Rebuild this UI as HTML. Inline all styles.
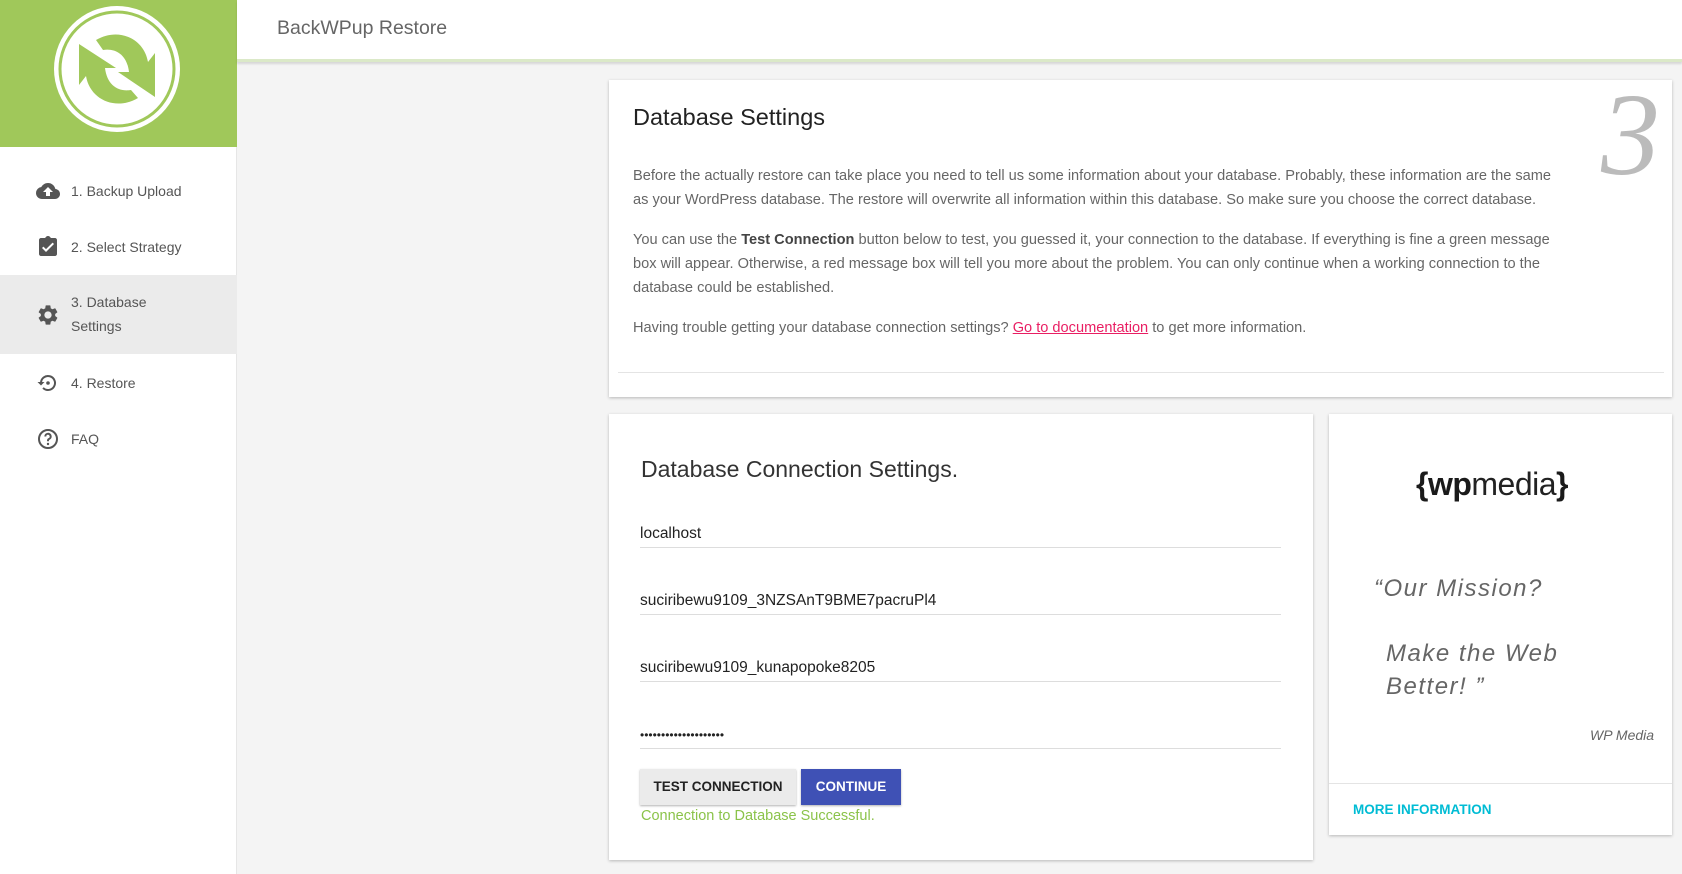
<!DOCTYPE html>
<html><head><meta charset="utf-8"><style>
*{box-sizing:border-box;margin:0;padding:0}
body{width:1682px;height:874px;background:#f4f4f4;font-family:"Liberation Sans",sans-serif;position:relative;overflow:hidden;color:#555}
.abs{position:absolute}
#side{left:0;top:0;width:237px;height:874px;background:#fff;border-right:1px solid #e6e6e6}
#logo{left:0;top:0;width:237px;height:147px;background:#a0c85a}
#hdr{left:237px;top:0;width:1445px;height:62px;background:#fff;border-bottom:3px solid #dbe9c8;box-shadow:0 2px 2px rgba(0,0,0,.12)}
.nav{position:absolute;left:71px;font-size:14px;color:#555;line-height:24px;white-space:nowrap}
.ico{position:absolute;left:36px;width:24px;height:24px}
.card{position:absolute;background:#fff;box-shadow:0 1px 3px rgba(0,0,0,.25)}
.p{position:absolute;left:633px;font-size:14.6px;line-height:24px;color:#666;white-space:nowrap}
.in{position:absolute;left:640px;width:641px;border-bottom:1px solid #ddd;height:30px;font-size:15.5px;color:#222;line-height:24px;padding-top:4px}
</style></head><body>
<div id="side" class="abs"></div>
<div id="logo" class="abs">
<svg width="237" height="147" viewBox="0 0 237 147"><circle cx="117" cy="69" r="63" fill="#fff"/><circle cx="117" cy="69" r="57" fill="none" stroke="#a0c85a" stroke-width="3"/>
<path d="M96 40 C118 27 144 38 148 62 L155 53 L155 97 L118 72 L129 72 C127 55 116 48 103 50 Z" fill="#a0c85a"/>
<path d="M138 98 C116 111 90 100 86 76 L79 85 L79 44 L116 68 L105 68 C107 85 118 92 131 90 Z" fill="#a0c85a"/></svg>
</div>
<div id="hdr" class="abs"><div style="position:absolute;left:40px;top:17px;font-size:19.5px;color:#666">BackWPup Restore</div></div>

<svg class="ico" style="top:179px" viewBox="0 0 24 24"><path fill="#555" d="M19.35 10.04A7.49 7.49 0 0 0 12 4C9.11 4 6.6 5.64 5.35 8.04A5.994 5.994 0 0 0 0 14c0 3.310 2.69 6 6 6h13c2.76 0 5-2.24 5-5 0-2.64-2.05-4.78-4.65-4.960zM14 13v4h-4v-4H7l5-5 5 5h-3z"/></svg>
<div class="nav" style="top:179px">1. Backup Upload</div>
<svg class="ico" style="top:235px" viewBox="0 0 24 24"><path fill="#555" d="M19 3h-4.18C14.4 1.84 13.3 1 12 1s-2.4.84-2.82 2H5c-1.1 0-2 .9-2 2v14c0 1.1.9 2 2 2h14c1.1 0 2-.9 2-2V5c0-1.1-.9-2-2-2zm-9 14l-4-4 1.41-1.41L10 14.17l6.590-6.59L18 9l-8 8z"/></svg>
<div class="nav" style="top:235px">2. Select Strategy</div>
<div class="abs" style="left:0;top:275px;width:237px;height:79px;background:#ebebeb"></div>
<svg class="ico" style="top:303px" viewBox="0 0 24 24"><path fill="#555" d="M19.14 12.94c.04-.3.06-.61.06-.94 0-.32-.02-.64-.07-.94l2.03-1.58a.49.49 0 0 0 .12-.61l-1.92-3.32a.488.488 0 0 0-.59-.22l-2.39.96c-.5-.38-1.03-.7-1.62-.94l-.36-2.54a.484.484 0 0 0-.48-.41h-3.84c-.24 0-.43.17-.47.41l-.36 2.54c-.59.24-1.13.57-1.62.94l-2.39-.96c-.22-.08-.47 0-.59.22L2.74 8.87c-.12.21-.08.47.12.61l2.03 1.58c-.05.3-.09.63-.09.94s.2.64.07.94l-2.03 1.58a.49.49 0 0 0-.12.61l1.92 3.32c.12.22.37.29.59.22l2.39-.96c.5.38 1.03.7 1.62.94l.36 2.54c.05.24.24.41.48.41h3.84c.24 0 .44-.17.47-.41l.36-2.54c.59-.24 1.13-.56 1.62-.94l2.39.96c.22.08.47 0 .59-.22l1.92-3.32c.12-.22.07-.47-.12-.61l-2.01-1.58zM12 15.6c-1.98 0-3.6-1.62-3.6-3.6s1.62-3.6 3.6-3.6 3.6 1.62 3.6 3.6-1.62 3.6-3.6 3.6z"/></svg>
<div class="nav" style="top:290px">3. Database<br>Settings</div>
<svg class="ico" style="top:371px" viewBox="0 0 24 24"><path fill="none" stroke="#555" stroke-width="2" d="M5 12a7 7 0 1 1 2.05 4.95"/><path fill="#555" d="M1.5 11h7l-3.5 3.5z"/><circle cx="12" cy="12" r="1.8" fill="#555"/></svg>
<div class="nav" style="top:371px">4. Restore</div>
<svg class="ico" style="top:427px" viewBox="0 0 24 24"><circle cx="12" cy="12" r="9" fill="none" stroke="#555" stroke-width="2"/><path d="M9.3 9.5a2.7 2.7 0 1 1 3.7 2.5c-.7.3-1 .8-1 1.6v.6" fill="none" stroke="#555" stroke-width="2"/><circle cx="12" cy="17" r="1.2" fill="#555"/></svg>
<div class="nav" style="top:427px">FAQ</div>

<div class="card" style="left:609px;top:80px;width:1063px;height:317px"></div>
<div class="abs" style="left:1601px;top:76px;font-family:'Liberation Serif',serif;font-style:italic;font-size:118px;color:#bbb;line-height:118px">3</div>
<div class="abs" style="left:633px;top:104px;font-size:23.5px;color:#222">Database Settings</div>
<div class="p" style="top:164px">Before the actually restore can take place you need to tell us some information about your database. Probably, these information are the same<br>as your WordPress database. The restore will overwrite all information within this database. So make sure you choose the correct database.</div>
<div class="p" style="top:228px">You can use the <b style="color:#444">Test Connection</b> button below to test, you guessed it, your connection to the database. If everything is fine a green message<br>box will appear. Otherwise, a red message box will tell you more about the problem. You can only continue when a working connection to the<br>database could be established.</div>
<div class="p" style="top:316px">Having trouble getting your database connection settings? <span style="color:#e91e63;text-decoration:underline">Go to documentation</span> to get more information.</div>
<div class="abs" style="left:618px;top:372px;width:1046px;border-top:1px solid #e4e4e4"></div>

<div class="card" style="left:609px;top:414px;width:704px;height:446px"></div>
<div class="abs" style="left:641px;top:456px;font-size:23px;color:#333">Database Connection Settings.</div>
<div class="in" style="top:518px">localhost</div>
<div class="in" style="top:585px">suciribewu9109_3NZSAnT9BME7pacruPl4</div>
<div class="in" style="top:652px">suciribewu9109_kunapopoke8205</div>
<div class="in" style="top:719px;font-size:12px">••••••••••••••••••••</div>
<div class="abs" style="left:640px;top:769px;width:156px;height:36px;background:#ebebeb;box-shadow:0 1px 2px rgba(0,0,0,.3);font-size:13.5px;font-weight:bold;color:#222;text-align:center;line-height:36px">TEST CONNECTION</div>
<div class="abs" style="left:801px;top:769px;width:100px;height:36px;background:#3f51b5;box-shadow:0 1px 2px rgba(0,0,0,.3);font-size:13.5px;font-weight:bold;color:#fff;text-align:center;line-height:36px">CONTINUE</div>
<div class="abs" style="left:641px;top:808px;font-size:14.5px;color:#8bc34a">Connection to Database Successful.</div>

<div class="card" style="left:1329px;top:414px;width:343px;height:421px"></div>
<div class="abs" style="left:1416px;top:466px;font-size:32px;color:#1a1a1a;letter-spacing:-0.5px"><b>{wp</b><span style="font-weight:normal;color:#222">media</span><b>}</b></div>
<div class="abs" style="left:1374px;top:572px;font-size:24px;font-style:italic;color:#666;letter-spacing:1.5px;line-height:33px">“Our Mission?</div>
<div class="abs" style="left:1386px;top:637px;font-size:24px;font-style:italic;color:#666;letter-spacing:1.5px;line-height:33px">Make the Web<br>Better! ”</div>
<div class="abs" style="left:1590px;top:727px;font-size:14px;font-style:italic;color:#666">WP Media</div>
<div class="abs" style="left:1329px;top:783px;width:343px;border-top:1px solid #e4e4e4"></div>
<div class="abs" style="left:1353px;top:802px;font-size:13.5px;font-weight:bold;color:#00bcd4">MORE INFORMATION</div>
</body></html>
